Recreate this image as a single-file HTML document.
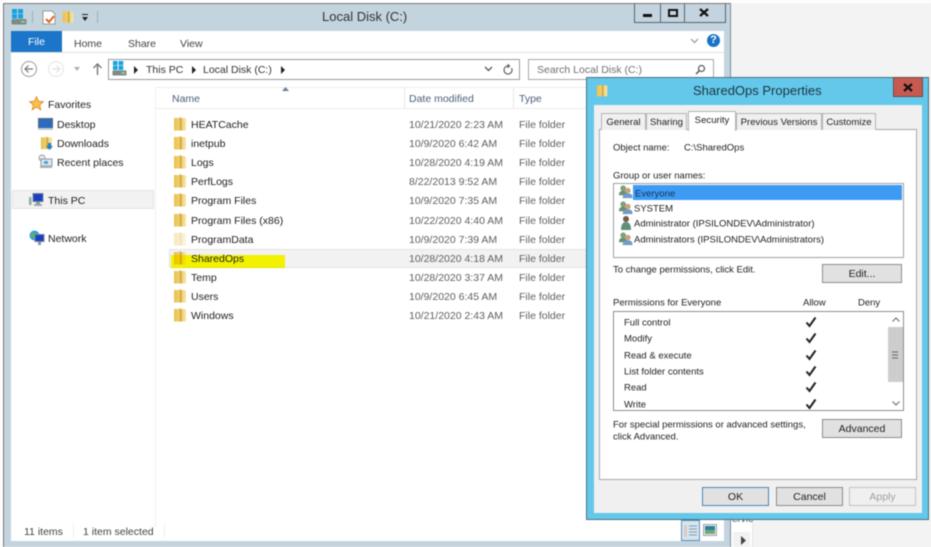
<!DOCTYPE html>
<html><head><meta charset="utf-8">
<style>
html,body{margin:0;padding:0;width:931px;height:547px;overflow:hidden;background:#f3f3f3}
#r{position:absolute;left:0;top:0;width:931px;height:547px;overflow:hidden;font-family:"Liberation Sans",sans-serif;filter:blur(.45px)}
#r div,#r span,#r svg{position:absolute}
.t{white-space:nowrap;line-height:14px;font-size:10.5px;color:#222;transform:translateY(-6px)}
.g{color:#5f5f5f}
.h{color:#4c607a}
.d{font-size:9.5px;color:#222;transform:translateY(-5.500px)}
.b{background:#e1e1e1;border:1px solid #8c8c8c;box-sizing:border-box;text-align:center;font-size:10.5px;color:#222;white-space:nowrap}
.tab{background:#f0f0f0;border:1px solid #b4b4b4;border-bottom:none;box-sizing:border-box;text-align:center;font-size:9.6px;color:#222;white-space:nowrap;line-height:17px}
</style></head><body>
<svg width="0" height="0" style="position:absolute"><defs>
<linearGradient id="fg" x1="0" x2="1" y1="0" y2="0"><stop offset="0" stop-color="#e9c04f"/><stop offset=".45" stop-color="#f0cf6e"/><stop offset=".55" stop-color="#c99a30"/><stop offset=".7" stop-color="#f2d682"/><stop offset="1" stop-color="#f7e6a6"/></linearGradient>
<symbol id="f" viewBox="0 0 16 16"><path d="M2 2h5l1-1 1 1h4l1 1v11.500H2z" fill="url(#fg)"/></symbol>
<symbol id="u" viewBox="0 0 16 16"><circle cx="5.500" cy="4.500" r="3" fill="#7ea07a"/><path d="M1 12c0-4 2-5 4.500-5S10 8 10 12z" fill="#6c9070"/><circle cx="10.500" cy="7" r="3" fill="#c9a27c"/><path d="M5 15c0-4 2-5 5.500-5s5 1 5 5z" fill="#6f9cc8"/></symbol>
<symbol id="ck" viewBox="0 0 12 12"><path d="M1.500 6.500L4.500 10 10.500 1.500" fill="none" stroke="#222" stroke-width="2"/></symbol>
<symbol id="dr" viewBox="0 0 16 16"><rect x="0.500" y="10" width="15" height="5.500" rx="1" fill="#7d8a85"/><rect x="10" y="12" width="4" height="1.500" fill="#8fe08f"/><rect x="1" y="0" width="5" height="4.500" fill="#17a3e0"/><rect x="7" y="0" width="5" height="4.500" fill="#17a3e0"/><rect x="1" y="5" width="5" height="4.500" fill="#17a3e0"/><rect x="7" y="5" width="5" height="4.500" fill="#17a3e0"/></symbol>
</defs></svg>
<div id="r">
<div style="left:0;top:0;width:931px;height:3px;background:#fff"></div>
<div style="left:0;top:0;width:3px;height:547px;background:#fff"></div>
<div style="left:3px;top:3px;width:728px;height:544px;background:#c3d4de;border-left:1px solid #777;border-top:1px solid #777;border-right:1px solid #7d8f9a;box-sizing:border-box"></div>
<div style="left:11px;top:31px;width:713px;height:510px;background:#fff"></div>
<svg style="left:11px;top:9px" width="16" height="16"><use href="#dr"/></svg>
<div style="left:32px;top:11px;width:1px;height:12px;background:#a0aeb8"></div>
<svg style="left:41px;top:9px" width="16" height="17" viewBox="0 0 16 17"><path d="M2 2h9l3 3v10H2z" fill="#fff" stroke="#9a9a9a"/><path d="M5 10l3 3 5-6" fill="none" stroke="#e0662a" stroke-width="2"/></svg>
<svg style="left:61px;top:9px" width="14" height="16"><use href="#f"/></svg>
<svg style="left:81px;top:14px" width="8" height="8"><rect x="1" y="0" width="6" height="1" fill="#222"/><path d="M1 3h6L4 7z" fill="#222"/></svg>
<div style="left:97px;top:11px;width:1px;height:12px;background:#a0aeb8"></div>
<div class="t" style="left:322px;top:16px;font-size:13px;color:#333">Local Disk (C:)</div>
<div style="left:634px;top:3px;width:92px;height:20px;border:1px solid #55646e;border-top:none;box-sizing:border-box"></div>
<div style="left:660px;top:3px;width:1px;height:19px;background:#55646e"></div>
<div style="left:684px;top:3px;width:1px;height:19px;background:#55646e"></div>
<div style="left:643px;top:14px;width:9px;height:3px;background:#111"></div>
<div style="left:668px;top:9px;width:10px;height:8px;border:2px solid #111;border-top-width:2px;box-sizing:border-box"></div>
<svg style="left:699px;top:8px" width="11" height="9"><path d="M1 1l8 7M9 1L1 8" stroke="#111" stroke-width="2.200" fill="none"/></svg>
<div style="left:11px;top:31px;width:51px;height:21px;background:#1b75c9;color:#fff;text-align:center;font-size:10.5px;line-height:23px">File</div>
<div class="t h" style="left:74px;top:43px;color:#444">Home</div>
<div class="t h" style="left:128px;top:43px;color:#444">Share</div>
<div class="t h" style="left:180px;top:43px;color:#444">View</div>
<div style="left:11px;top:52px;width:713px;height:1px;background:#dfe3e6"></div>
<svg style="left:690px;top:38px" width="9" height="7"><path d="M1 1l3.500 3.500L8 1" stroke="#8b98a3" stroke-width="1.200" fill="none"/></svg>
<div style="left:707px;top:34px;width:13px;height:13px;border-radius:50%;background:#1a73c7;color:#fff;font-size:11px;font-weight:bold;text-align:center;line-height:13px">?</div>
<svg style="left:20px;top:60px" width="18" height="18"><circle cx="9" cy="9" r="7.500" fill="#fff" stroke="#9a9a9a"/><path d="M13 9H5.500M8.500 5.500L5 9l3.500 3.500" fill="none" stroke="#777" stroke-width="1.200"/></svg>
<svg style="left:47px;top:60px" width="18" height="18"><circle cx="9" cy="9" r="7.500" fill="#fff" stroke="#e4e4e4"/><path d="M5 9h7.500M9.500 5.500L13 9l-3.500 3.500" fill="none" stroke="#e0e0e0" stroke-width="1.200"/></svg>
<svg style="left:73px;top:67px" width="8" height="5"><path d="M1 0h6L4 4z" fill="#b0b0b0"/></svg>
<svg style="left:92px;top:62px" width="11" height="13"><path d="M5.500 13V2M1.500 6l4-4 4 4" fill="none" stroke="#777" stroke-width="1.400"/></svg>
<div style="left:108px;top:59px;width:412px;height:21px;border:1px solid #9a9a9a;box-sizing:border-box;background:#fff"></div>
<svg style="left:112px;top:61px" width="15" height="15"><use href="#dr"/></svg>
<svg style="left:133px;top:66px" width="6" height="8"><path d="M1 0l4 4-4 4z" fill="#222"/></svg>
<div class="t" style="left:146px;top:69px;color:#333">This PC</div>
<svg style="left:191px;top:66px" width="6" height="8"><path d="M1 0l4 4-4 4z" fill="#222"/></svg>
<div class="t" style="left:203px;top:69px;color:#333">Local Disk (C:)</div>
<svg style="left:280px;top:66px" width="6" height="8"><path d="M1 0l4 4-4 4z" fill="#222"/></svg>
<svg style="left:484px;top:66px" width="9" height="7"><path d="M1 1l3.500 3.500L8 1" stroke="#555" stroke-width="1.300" fill="none"/></svg>
<svg style="left:502px;top:63px" width="12" height="13"><path d="M9.500 5A4 4 0 1 1 6 3" fill="none" stroke="#666" stroke-width="1.200"/><path d="M5.500 0.500v5L8.500 3z" fill="#666"/></svg>
<div style="left:528px;top:59px;width:186px;height:21px;border:1px solid #a8a8a8;box-sizing:border-box;background:#fff"></div>
<div class="t g" style="left:537px;top:69px;color:#707070">Search Local Disk (C:)</div>
<svg style="left:695px;top:64px" width="11" height="11"><circle cx="6.500" cy="4.500" r="3" fill="none" stroke="#555" stroke-width="1.200"/><path d="M4.500 6.500L1 10" stroke="#555" stroke-width="1.500"/></svg>
<svg style="left:29px;top:96px" width="15" height="15" viewBox="0 0 15 15"><path d="M7.500 .5l2 4.700 5 .4-3.800 3.300 1.200 5-4.400-2.700-4.400 2.700 1.200-5L.5 5.600l5-.4z" fill="#f7c14c" stroke="#e58a2a" stroke-width=".8"/></svg>
<div class="t" style="left:48px;top:104px">Favorites</div>
<svg style="left:38px;top:118px" width="15" height="12"><rect x=".5" y=".5" width="14" height="10" fill="#2f6bbd" stroke="#5a6a7a"/><rect x="0" y="10" width="15" height="2" fill="#c4ccd4"/></svg>
<div class="t" style="left:57px;top:124px">Desktop</div>
<svg style="left:39px;top:135px" width="15" height="16"><use href="#f"/><path d="M9 8h3v3h2l-3.500 4L7 11h2z" fill="#1e7fd6"/></svg>
<div class="t" style="left:57px;top:143px">Downloads</div>
<svg style="left:38px;top:154px" width="15" height="15"><circle cx="4" cy="4" r="3" fill="#eee" stroke="#999"/><rect x="3" y="5" width="11" height="7" fill="#dfe6ea" stroke="#8c979e"/><rect x="6" y="7" width="4" height="3" fill="#4ea3de"/><rect x="2" y="12" width="12" height="2" fill="#a9b2b7"/></svg>
<div class="t" style="left:57px;top:162px">Recent places</div>
<div style="left:12px;top:190px;width:142px;height:19px;background:#f2f2f2;border:1px solid #e4e4e4;box-sizing:border-box"></div>
<svg style="left:29px;top:193px" width="15" height="14"><rect x="4" y="0.500" width="10" height="8" fill="#1b3fc4" stroke="#7a8790"/><rect x="7" y="9" width="4" height="2" fill="#8a959c"/><rect x="5" y="11" width="8" height="2" fill="#a0a9ae"/><rect x="0" y="4" width="2.500" height="8" fill="#9aa5aa"/><rect x="0" y="4" width="2.500" height="2" fill="#6cd06c"/></svg>
<div class="t" style="left:48px;top:200px">This PC</div>
<svg style="left:29px;top:230px" width="16" height="16"><circle cx="5.500" cy="5.500" r="5" fill="#3aa0d8"/><path d="M2 4c2-2 4-1 4 1s-3 3-4 1z" fill="#58b858"/><rect x="6" y="4.500" width="9" height="7" fill="#1b3fc4" stroke="#7a8790"/><rect x="9" y="12" width="3" height="3" fill="#8a959c"/></svg>
<div class="t" style="left:48px;top:238px">Network</div>
<div style="left:155px;top:87px;width:1px;height:440px;background:#f1f1f1"></div>
<div style="left:156px;top:87px;width:568px;height:1px;background:#ededed"></div>
<div style="left:156px;top:108px;width:568px;height:1px;background:#ededed"></div>
<div style="left:404px;top:88px;width:1px;height:20px;background:#e8e8e8"></div>
<div style="left:513px;top:88px;width:1px;height:20px;background:#e8e8e8"></div>
<svg style="left:282px;top:87px" width="7" height="4"><path d="M3.500 0L7 4H0z" fill="#6c7f95"/></svg>
<div class="t h" style="left:172px;top:98px">Name</div>
<div class="t h" style="left:409px;top:98px">Date modified</div>
<div class="t h" style="left:519px;top:98px">Type</div>
<div style="left:169px;top:249px;width:418px;height:19px;background:#f2f2f2;border:1px solid #e2e2e2;box-sizing:border-box"></div>
<svg style="left:172px;top:116px" width="16" height="16"><use href="#f"/></svg>
<div class="t" style="left:191px;top:123.500px">HEATCache</div>
<div class="t g" style="left:409px;top:123.500px">10/21/2020 2:23 AM</div>
<div class="t g" style="left:519px;top:123.500px">File folder</div>
<svg style="left:172px;top:135px" width="16" height="16"><use href="#f"/></svg>
<div class="t" style="left:191px;top:142.500px">inetpub</div>
<div class="t g" style="left:409px;top:142.500px">10/9/2020 6:42 AM</div>
<div class="t g" style="left:519px;top:142.500px">File folder</div>
<svg style="left:172px;top:154px" width="16" height="16"><use href="#f"/></svg>
<div class="t" style="left:191px;top:161.500px">Logs</div>
<div class="t g" style="left:409px;top:161.500px">10/28/2020 4:19 AM</div>
<div class="t g" style="left:519px;top:161.500px">File folder</div>
<svg style="left:172px;top:173px" width="16" height="16"><use href="#f"/></svg>
<div class="t" style="left:191px;top:180.500px">PerfLogs</div>
<div class="t g" style="left:409px;top:180.500px">8/22/2013 9:52 AM</div>
<div class="t g" style="left:519px;top:180.500px">File folder</div>
<svg style="left:172px;top:192px" width="16" height="16"><use href="#f"/></svg>
<div class="t" style="left:191px;top:199.500px">Program Files</div>
<div class="t g" style="left:409px;top:199.500px">10/9/2020 7:35 AM</div>
<div class="t g" style="left:519px;top:199.500px">File folder</div>
<svg style="left:172px;top:212px" width="16" height="16"><use href="#f"/></svg>
<div class="t" style="left:191px;top:219.500px">Program Files (x86)</div>
<div class="t g" style="left:409px;top:219.500px">10/22/2020 4:40 AM</div>
<div class="t g" style="left:519px;top:219.500px">File folder</div>
<svg style="left:172px;top:231px;opacity:.35" width="16" height="16"><use href="#f"/></svg>
<div class="t" style="left:191px;top:238.500px">ProgramData</div>
<div class="t g" style="left:409px;top:238.500px">10/9/2020 7:39 AM</div>
<div class="t g" style="left:519px;top:238.500px">File folder</div>
<svg style="left:172px;top:250px" width="16" height="16"><use href="#f"/></svg>
<div style="left:171px;top:255px;width:114px;height:13px;background:#ffff00;mix-blend-mode:multiply"></div>
<div class="t" style="left:191px;top:257.500px">SharedOps</div>
<div class="t g" style="left:409px;top:257.500px">10/28/2020 4:18 AM</div>
<div class="t g" style="left:519px;top:257.500px">File folder</div>
<svg style="left:172px;top:269px" width="16" height="16"><use href="#f"/></svg>
<div class="t" style="left:191px;top:276.500px">Temp</div>
<div class="t g" style="left:409px;top:276.500px">10/28/2020 3:37 AM</div>
<div class="t g" style="left:519px;top:276.500px">File folder</div>
<svg style="left:172px;top:288px" width="16" height="16"><use href="#f"/></svg>
<div class="t" style="left:191px;top:295.500px">Users</div>
<div class="t g" style="left:409px;top:295.500px">10/9/2020 6:45 AM</div>
<div class="t g" style="left:519px;top:295.500px">File folder</div>
<svg style="left:172px;top:307px" width="16" height="16"><use href="#f"/></svg>
<div class="t" style="left:191px;top:314.500px">Windows</div>
<div class="t g" style="left:409px;top:314.500px">10/21/2020 2:43 AM</div>
<div class="t g" style="left:519px;top:314.500px">File folder</div>
<div class="t" style="left:24px;top:531px;color:#444">11 items</div>
<div style="left:73px;top:524px;width:1px;height:14px;background:#eee"></div>
<div class="t" style="left:83px;top:531px;color:#444">1 item selected</div>
<div style="left:164px;top:524px;width:1px;height:14px;background:#eee"></div>
<div style="left:681px;top:520px;width:19px;height:21px;background:#d5e6f3;border:1px solid #5f8fb5;box-sizing:border-box"></div>
<svg style="left:684px;top:524px" width="14" height="14"><rect x="0" y="1" width="3" height="12" fill="#e0c8c0"/><path d="M5 2h8M5 5h8M5 8h8M5 11h8" stroke="#8a9aa8"/></svg>
<svg style="left:703px;top:524px" width="14" height="12"><rect x=".5" y=".5" width="13" height="11" fill="#eee" stroke="#98a4ac"/><rect x="2" y="2" width="10" height="4" fill="#2e7f9c"/><rect x="2" y="6" width="10" height="4" fill="#6fa87a"/></svg>
<div style="left:731px;top:520px;width:22px;height:27px;background:#fff"></div>
<div style="left:752px;top:520px;width:1px;height:27px;background:#e6e6e6"></div>
<div style="left:731px;top:520px;width:22px;height:7px;overflow:hidden"><span style="left:1px;top:-6px;font-size:10px;line-height:12px;color:#555">ervic</span></div>
<div style="left:733px;top:532px;width:17px;height:15px;background:#f2f2f2"></div>
<svg style="left:741px;top:536px" width="5" height="9"><path d="M0 0l5 4.500L0 9z" fill="#444"/></svg>
<div style="left:586px;top:77px;width:343px;height:443px;background:#63c8ea;border:1px solid #4f6f80;box-sizing:border-box"></div>
<div style="left:594px;top:105px;width:328px;height:408px;background:#f0f0f0"></div>
<svg style="left:595px;top:83px" width="14" height="15"><use href="#f"/></svg>
<div class="t" style="left:693px;top:90px;font-size:13px;color:#1d3443">SharedOps Properties</div>
<div style="left:893px;top:77px;width:30px;height:20px;background:#c75a50;border:1px solid #6b4a48;box-sizing:border-box"></div>
<svg style="left:903px;top:83px" width="11" height="9"><path d="M1 1l8 7M9 1L1 8" stroke="#111" stroke-width="2.200" fill="none"/></svg>
<div style="left:599px;top:129px;width:318px;height:351px;background:#fff;border:1px solid #a8a8a8;box-sizing:border-box"></div>
<div class="tab" style="left:601px;top:113px;width:45px;height:17px">General</div>
<div class="tab" style="left:646px;top:113px;width:41px;height:17px">Sharing</div>
<div class="tab" style="left:736px;top:113px;width:86px;height:17px">Previous Versions</div>
<div class="tab" style="left:822px;top:113px;width:54px;height:17px">Customize</div>
<div class="tab" style="left:688px;top:111px;width:48px;height:20px;background:#fff;line-height:18px;z-index:2">Security</div>
<div class="t d" style="left:613px;top:147px">Object name:</div>
<div class="t d" style="left:684px;top:147px">C:\SharedOps</div>
<div class="t d" style="left:613px;top:175px">Group or user names:</div>
<div style="left:613px;top:183px;width:291px;height:75px;background:#fff;border:1px solid #a0a0a0;box-sizing:border-box"></div>
<div style="left:633px;top:185px;width:269px;height:15px;background:#3d9bf3"></div>
<svg style="left:618px;top:184px" width="15" height="15"><use href="#u"/></svg>
<div class="t d" style="left:635px;top:193px;color:#15355a">Everyone</div>
<svg style="left:618px;top:200px" width="15" height="15"><use href="#u"/></svg>
<div class="t d" style="left:634px;top:208px">SYSTEM</div>
<svg style="left:620px;top:215px" width="12" height="15" viewBox="0 0 12 15"><circle cx="6" cy="4" r="3" fill="#7a5a40"/><path d="M1 15c0-6 2-8 5-8s5 2 5 8z" fill="#5e9278"/></svg>
<div class="t d" style="left:634px;top:223px">Administrator (IPSILONDEV\Administrator)</div>
<svg style="left:618px;top:231px" width="15" height="15"><use href="#u"/></svg>
<div class="t d" style="left:634px;top:239px">Administrators (IPSILONDEV\Administrators)</div>
<div class="t d" style="left:613px;top:269px">To change permissions, click Edit.</div>
<div class="b" style="left:822px;top:264px;width:80px;height:19px;line-height:18px">Edit...</div>
<div class="t d" style="left:613px;top:302px">Permissions for Everyone</div>
<div class="t d" style="left:803px;top:302px">Allow</div>
<div class="t d" style="left:858px;top:302px">Deny</div>
<div style="left:613px;top:311px;width:291px;height:100px;background:#fff;border:1px solid #8e8e8e;box-sizing:border-box"></div>
<div style="left:888px;top:327px;width:15px;height:55px;background:#cdcdcd"></div>
<svg style="left:892px;top:317px" width="8" height="5"><path d="M.5 4.500L4 1l3.500 3.500" fill="none" stroke="#666"/></svg>
<svg style="left:892px;top:401px" width="8" height="5"><path d="M.5.500L4 4 7.500.5" fill="none" stroke="#666"/></svg>
<svg style="left:891px;top:351px" width="8" height="8"><path d="M1 1h6M1 4h6M1 7h6" stroke="#666"/></svg>
<div class="t d" style="left:624px;top:322px">Full control</div>
<div class="t d" style="left:624px;top:338px">Modify</div>
<div class="t d" style="left:624px;top:355px">Read &amp; execute</div>
<div class="t d" style="left:624px;top:371px">List folder contents</div>
<div class="t d" style="left:624px;top:387px">Read</div>
<div class="t d" style="left:624px;top:404px">Write</div>
<svg style="left:805px;top:316px" width="12" height="12"><use href="#ck"/></svg>
<svg style="left:805px;top:332px" width="12" height="12"><use href="#ck"/></svg>
<svg style="left:805px;top:349px" width="12" height="12"><use href="#ck"/></svg>
<svg style="left:805px;top:365px" width="12" height="12"><use href="#ck"/></svg>
<svg style="left:805px;top:381px" width="12" height="12"><use href="#ck"/></svg>
<svg style="left:805px;top:398px" width="12" height="12"><use href="#ck"/></svg>
<div class="t d" style="left:613px;top:424px">For special permissions or advanced settings,</div>
<div class="t d" style="left:613px;top:436px">click Advanced.</div>
<div class="b" style="left:822px;top:419px;width:80px;height:19px;line-height:18px">Advanced</div>
<div class="b" style="left:702px;top:487px;width:67px;height:19px;line-height:18px;border-color:#4a86b4">OK</div>
<div class="b" style="left:776px;top:487px;width:67px;height:19px;line-height:18px">Cancel</div>
<div class="b" style="left:849px;top:487px;width:67px;height:19px;line-height:18px;background:#f0f0f0;border-color:#c4c4c4;color:#a0a0a0">Apply</div>
</div>
</body></html>
